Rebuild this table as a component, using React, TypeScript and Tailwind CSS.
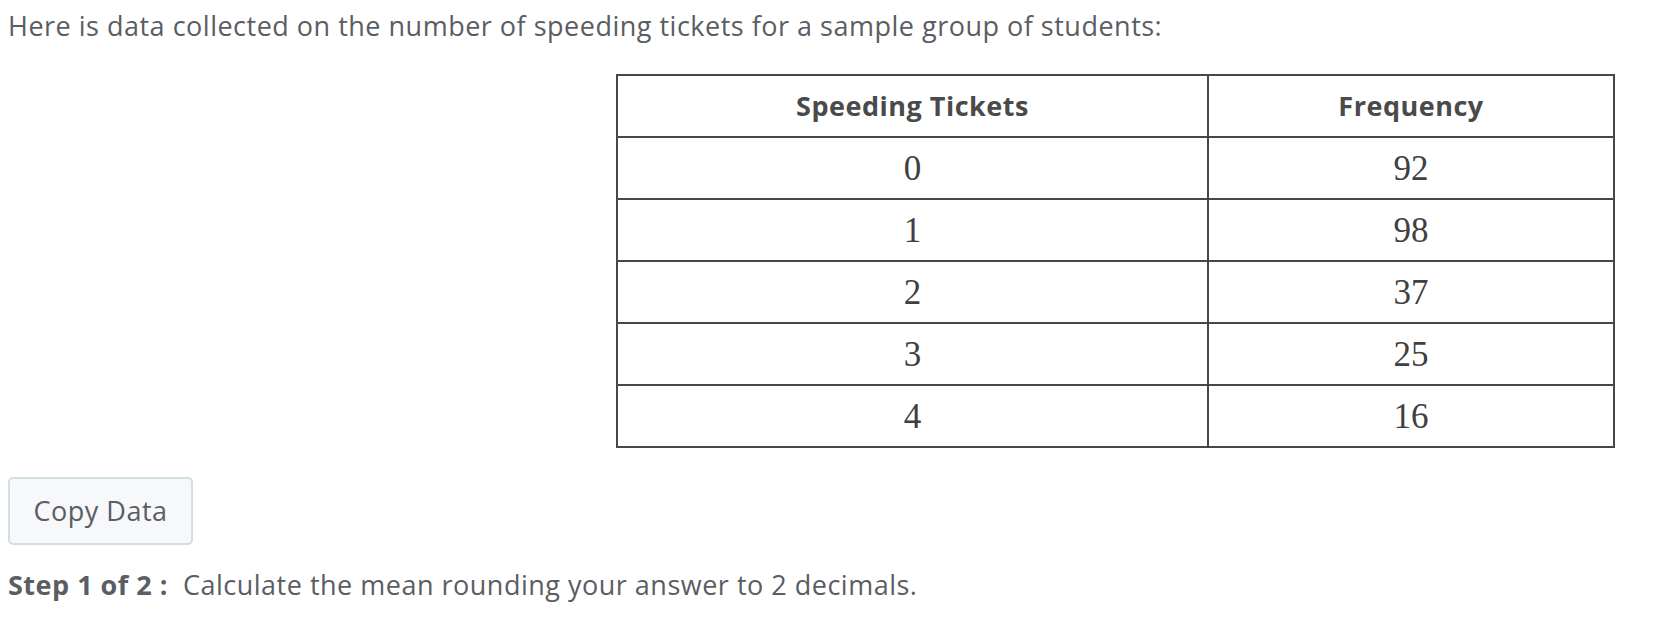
const rows = [
  { tickets: 0, freq: 92 },
  { tickets: 1, freq: 98 },
  { tickets: 2, freq: 37 },
  { tickets: 3, freq: 25 },
  { tickets: 4, freq: 16 },
]

const sans = "font-['Open_Sans','Liberation_Sans',sans-serif]"
const serif = "font-['Liberation_Serif','Times_New_Roman',serif]"

export default function App() {
  return (
    <div className={`${sans} text-[#5a5d63] bg-white w-[1674px] h-[626px] pl-[8px] pt-[8px] tracking-[0.5px]`}>
      <p className="text-[27px] leading-[36px]">
        Here is data collected on the number of speeding tickets for a sample group of students:
      </p>

      {/* data table */}
      <div className="flex mt-[30px]">
        <table className="ml-[608px] w-[999px] border-collapse border-2 border-[#474747] tracking-normal">
          <thead>
            <tr className="h-[62px]">
              <th className="w-[591px] border-2 border-[#474747] text-[27px] font-bold tracking-[0.5px] text-[#4a4a4a]">
                Speeding Tickets
              </th>
              <th className="border-2 border-[#474747] text-[27px] font-bold tracking-[0.5px] text-[#4a4a4a]">
                Frequency
              </th>
            </tr>
          </thead>
          <tbody>
            {rows.map((r) => (
              <tr key={r.tickets} className="h-[62px]">
                <td className={`${serif} border-2 border-[#474747] text-center text-[35px] leading-none text-[#404040]`}>
                  {r.tickets}
                </td>
                <td className={`${serif} border-2 border-[#474747] text-center text-[35px] leading-none text-[#404040]`}>
                  {r.freq}
                </td>
              </tr>
            ))}
          </tbody>
        </table>
      </div>

      <button className="mt-[29px] w-[185px] h-[68px] rounded-[5px] border-2 border-[#d3dde4] bg-[#f6f8fa] text-[27px] text-[#5a5d63]">
        Copy Data
      </button>

      <p className="mt-[22px] text-[27px] leading-[36px]">
        <span className="font-bold">Step 1 of 2&nbsp;:</span>&nbsp; Calculate the mean rounding your answer to 2 decimals.
      </p>
    </div>
  )
}
